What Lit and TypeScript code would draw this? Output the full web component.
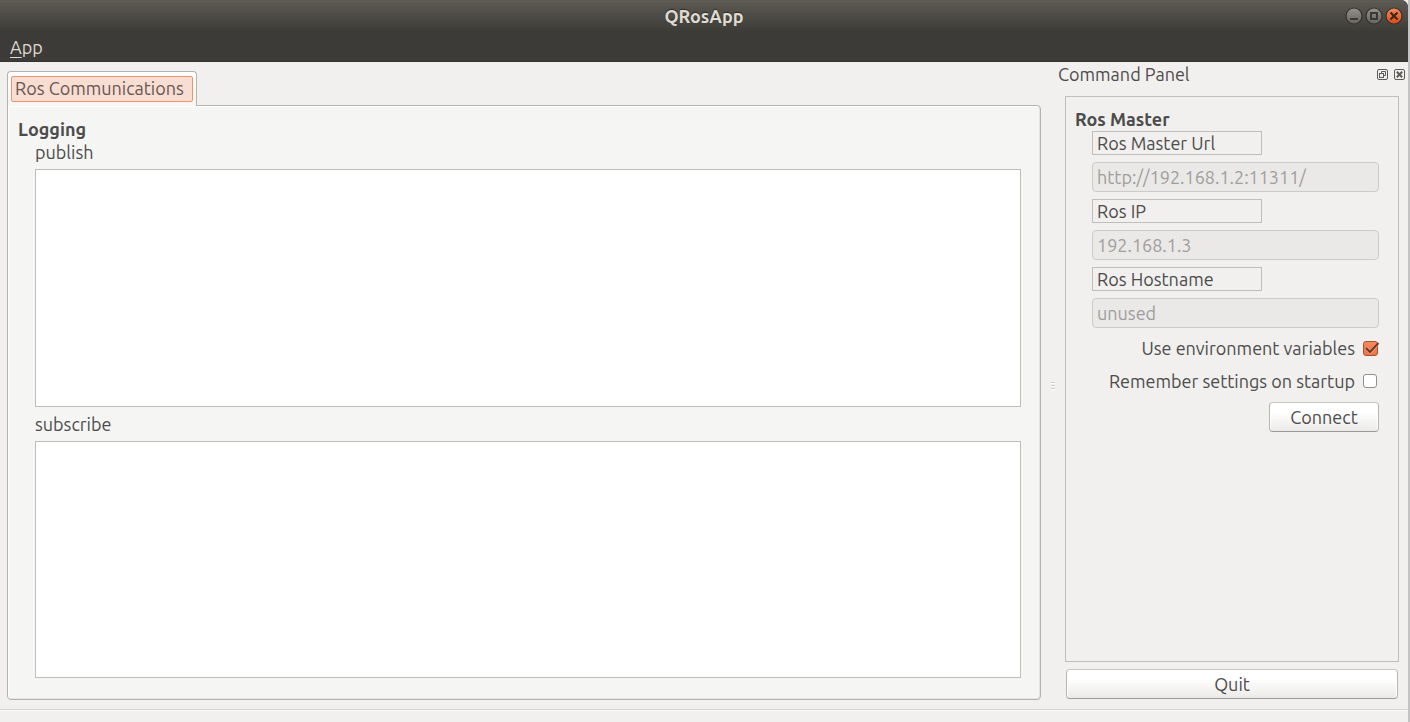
import { LitElement, html, svg, css, nothing } from "lit";
import { customElement, property, state } from "lit/decorators.js";

const textBase = css`
  :host {
    font-family: Ubuntu, "Noto Sans", "Open Sans", sans-serif;
    font-size: 18px;
    line-height: 24px;
    color: #4c4c4c;
    box-sizing: border-box;
  }
  *,
  *::before,
  *::after {
    box-sizing: border-box;
  }
  button,
  input,
  textarea {
    font: inherit;
    color: inherit;
    margin: 0;
  }
`;

@customElement("title-bar")
export class TitleBar extends LitElement {
  @property() heading = "";

  static styles = [
    textBase,
    css`
      :host {
        display: block;
        background: linear-gradient(#504e47 0, #66635a 1px, #5b5951 2px, #3d3b37 32px);
        background-color: #3c3b37;
        border-radius: 0 7px 0 0;
        border-bottom: 1px solid #35342f;
        color: #dfdbd2;
      }
      .top {
        display: grid;
        grid-template-columns: 1fr auto 1fr;
        align-items: center;
        height: 32px;
        padding: 0 5px;
      }
      h1 {
        grid-column: 2;
        margin: 0;
        font-size: 18px;
        line-height: 24px;
        font-weight: 700;
        text-shadow: 0 -1px 1px #2c2b28;
      }
      .controls {
        display: flex;
        justify-content: flex-end;
        gap: 2px;
      }
      .control {
        display: block;
        width: 18px;
        height: 18px;
        padding: 0;
        border: 0;
        background: none;
      }
      svg {
        display: block;
      }
      nav {
        display: flex;
        height: 29px;
        padding: 0 8px;
        align-items: center;
      }
      .menu {
        border: 0;
        background: none;
        padding: 0 2px;
      }
      .key {
        text-decoration: underline;
        text-decoration-thickness: 1px;
        text-underline-offset: 3px;
      }
    `,
  ];

  private control(label: string, close: boolean, glyph: unknown) {
    const id = close ? "hot" : "cool";
    return html`<button class="control" type="button" aria-label=${label}>
      <svg width="18" height="18" viewBox="0 0 18 18" aria-hidden="true">
        <defs>
          <linearGradient id=${id} x1="0" y1="0" x2="0" y2="1">
            <stop offset="0" stop-color=${close ? "#f58a62" : "#94928b"} />
            <stop offset="1" stop-color=${close ? "#dd4814" : "#65635c"} />
          </linearGradient>
        </defs>
        <circle cx="9" cy="9" r="8" fill="url(#${id})" stroke="#33322e" stroke-width="1.2" />
        ${glyph}
      </svg>
    </button>`;
  }

  render() {
    return html`
      <div class="top">
        <h1>${this.heading}</h1>
        <div class="controls">
          ${this.control("Minimize", false, svg`<path d="M5 12h8" stroke="#3a3935" stroke-width="2" />`)}
          ${this.control(
            "Maximize",
            false,
            svg`<rect x="6" y="6" width="6" height="6" fill="none" stroke="#3a3935" stroke-width="2" />`
          )}
          ${this.control(
            "Close",
            true,
            svg`<path d="M5.5 5.5l7 7M12.5 5.5l-7 7" stroke="#3a2a14" stroke-width="2.2" />`
          )}
        </div>
      </div>
      <nav><button class="menu" type="button"><span class="key">A</span>pp</button></nav>
    `;
  }
}

@customElement("log-pane")
export class LogPane extends LitElement {
  static styles = [
    textBase,
    css`
      :host {
        display: flex;
        flex-direction: column;
        min-width: 0;
      }
      .tab {
        align-self: flex-start;
        width: 190px;
        height: 35px;
        padding: 4px 3px 5px;
        margin-bottom: -1px;
        border: 1px solid #b5b3af;
        border-bottom: 0;
        border-radius: 4px 4px 0 0;
        background: linear-gradient(#fff, #f5f5f3);
        text-align: left;
        z-index: 1;
      }
      .tab-text {
        display: block;
        height: 26px;
        padding: 0 3px;
        line-height: 23px;
        border: 1px solid #f0946c;
        border-radius: 2px;
        background: #f8ddd3;
        color: #6a5650;
      }
      .page {
        flex: 1;
        display: flex;
        flex-direction: column;
        min-height: 0;
        padding: 13px 19px 21px 10px;
        border: 1px solid #b5b3af;
        border-radius: 0 4px 4px 4px;
        background: #f5f5f3;
        box-shadow: inset 1px 1px #fff, inset -1px -1px #e4e3e1;
      }
      h2 {
        margin: 0;
        font-size: 18px;
        line-height: 21px;
      }
      .group {
        flex: 1;
        display: flex;
        flex-direction: column;
        min-height: 0;
        padding-left: 17px;
      }
      label {
        line-height: 24px;
      }
      textarea {
        flex: 1;
        display: block;
        width: 100%;
        min-height: 0;
        margin: 5px 0;
        border: 1px solid #bfbebb;
        border-radius: 0;
        background: #fff;
        resize: none;
        outline: 0;
      }
      textarea:last-child {
        margin-bottom: 0;
      }
    `,
  ];

  render() {
    return html`
      <button class="tab" type="button" role="tab" aria-selected="true">
        <span class="tab-text">Ros Communications</span>
      </button>
      <section class="page">
        <h2>Logging</h2>
        <div class="group">
          <label for="publish">publish</label>
          <textarea id="publish" readonly></textarea>
          <label for="subscribe">subscribe</label>
          <textarea id="subscribe" readonly></textarea>
        </div>
      </section>
    `;
  }
}

@customElement("command-panel")
export class CommandPanel extends LitElement {
  @state() private useEnv = true;
  @state() private remember = false;

  static styles = [
    textBase,
    css`
      :host {
        display: flex;
        flex-direction: column;
      }
      header {
        display: flex;
        align-items: center;
        height: 25px;
        gap: 6px;
        padding-right: 3px;
      }
      h2 {
        flex: 1;
        align-self: flex-start;
        margin: 0;
        font-size: 18px;
        line-height: 24px;
        font-weight: 400;
      }
      .dock {
        display: block;
        width: 11px;
        height: 11px;
        padding: 0;
        border: 0;
        background: none;
      }
      svg {
        display: block;
        overflow: visible;
      }
      .frame {
        flex: 1;
        display: flex;
        flex-direction: column;
        margin: 9px 9px 7px 7px;
        padding: 10px 19px 0 9px;
        border: 1px solid #bfbebb;
      }
      h3 {
        margin: 0;
        font-size: 18px;
        line-height: 24px;
      }
      .form {
        display: flex;
        flex-direction: column;
        align-items: flex-end;
        padding-left: 17px;
      }
      .caption {
        align-self: flex-start;
        width: 170px;
        height: 24px;
        padding: 0 4px;
        line-height: 22px;
        border: 1px solid #bfbebb;
      }
      .field {
        width: 100%;
        height: 30px;
        margin: 7px 0;
        padding: 0 4px;
        border: 1px solid #cccbc8;
        border-radius: 4px;
        background: #eae9e7;
        color: #9f9e9c;
        -webkit-text-fill-color: #9f9e9c;
      }
      .checks {
        display: grid;
        justify-items: end;
        gap: 9px;
        margin: 1px 0 9px;
      }
      .check {
        display: flex;
        align-items: flex-end;
        gap: 8px;
        height: 24px;
      }
      .box {
        display: grid;
        width: 16px;
        height: 16px;
        margin-bottom: 3px;
      }
      .box > * {
        grid-area: 1 / 1;
      }
      .box input {
        appearance: none;
        width: 14px;
        height: 14px;
        border: 1px solid #91908c;
        border-radius: 3px;
        background: #fff;
      }
      .box input:checked {
        width: 15px;
        height: 15px;
        border-color: #a4532f;
        background: linear-gradient(#f6895f, #ee7445);
      }
      .box svg {
        pointer-events: none;
      }
      .push {
        height: 30px;
        padding: 0 19px;
        border: 1px solid #b7b5b1;
        border-top-color: #c8c6c2;
        border-bottom-color: #9c9a96;
        border-radius: 4px;
        background: linear-gradient(#fff 30%, #ebeae8);
        box-shadow: inset 1px 0 #fff, inset -1px 0 #fff;
      }
      .connect {
        width: 110px;
      }
      .quit {
        margin: 0 10px 0 8px;
      }
    `,
  ];

  private field(id: string, caption: string, value: string) {
    return html`<label class="caption" for=${id}>${caption}</label>
      <input class="field" id=${id} type="text" .value=${value} disabled />`;
  }

  private check(id: string, caption: string, on: boolean, toggle: () => void) {
    return html`<div class="check">
      <label for=${id}>${caption}</label>
      <span class="box">
        <input id=${id} type="checkbox" .checked=${on} @change=${toggle} />
        ${on
          ? html`<svg width="16" height="16" viewBox="0 0 16 16" aria-hidden="true">
              <path d="M3.2 7l4 4.2L15.4 2.2" fill="none" stroke="#f9b89c" stroke-width="3.4" opacity=".6" />
              <path d="M3 7l4 4L15.4 2" fill="none" stroke="#6b3a26" stroke-width="2" />
            </svg>`
          : nothing}
      </span>
    </div>`;
  }

  render() {
    return html`
      <header>
        <h2>Command Panel</h2>
        <button class="dock" type="button" aria-label="Float">
          <svg width="11" height="11" viewBox="0 0 11 11" fill="none" stroke="#5c5b58" aria-hidden="true">
            <rect x=".5" y=".5" width="10" height="10" rx="1.5" />
            <path d="M4.5 4.5v-2h4v4h-2" />
            <rect x="2.5" y="4.5" width="4" height="4" />
          </svg>
        </button>
        <button class="dock" type="button" aria-label="Close panel">
          <svg width="11" height="11" viewBox="0 0 11 11" fill="none" stroke="#5c5b58" aria-hidden="true">
            <rect x=".5" y=".5" width="10" height="10" rx="1.5" />
            <path d="M2.8 2.8l5.4 5.4M8.2 2.8L2.8 8.2" stroke-width="2" />
          </svg>
        </button>
      </header>
      <section class="frame">
        <h3>Ros Master</h3>
        <div class="form">
          ${this.field("url", "Ros Master Url", "http://192.168.1.2:11311/")}
          ${this.field("ip", "Ros IP", "192.168.1.3")}
          ${this.field("hostname", "Ros Hostname", "unused")}
          <div class="checks">
            ${this.check("env", "Use environment variables", this.useEnv, () => (this.useEnv = !this.useEnv))}
            ${this.check("remember", "Remember settings on startup", this.remember, () => (this.remember = !this.remember))}
          </div>
          <button class="push connect" type="button">Connect</button>
        </div>
      </section>
      <button class="push quit" type="button">Quit</button>
    `;
  }
}

@customElement("app-root")
export class AppRoot extends LitElement {
  static styles = [
    textBase,
    css`
      :host {
        display: flex;
        flex-direction: column;
        height: 100vh;
        padding-right: 2px;
        background: linear-gradient(to left, #c4c3c3 2px, #f1f0ee 2px);
      }
      main {
        flex: 1;
        display: grid;
        grid-template-columns: minmax(0, 1fr) 17px 350px;
        min-height: 0;
        padding-left: 7px;
      }
      log-pane {
        padding: 9px 0;
      }
      command-panel {
        padding-bottom: 10px;
      }
      .splitter {
        align-self: center;
        justify-self: end;
        display: grid;
        gap: 2px;
        padding-right: 3px;
      }
      .grip {
        width: 4px;
        height: 1px;
        background: #cfcdc9;
        box-shadow: 0 1px #fff;
      }
      footer {
        height: 13px;
        border-top: 1px solid #d3d2cf;
        box-shadow: inset 0 1px #fbfbfa;
      }
    `,
  ];

  render() {
    return html`
      <title-bar heading="QRosApp"></title-bar>
      <main>
        <log-pane></log-pane>
        <div class="splitter" role="separator" aria-orientation="vertical">
          <span class="grip"></span><span class="grip"></span><span class="grip"></span>
        </div>
        <command-panel></command-panel>
      </main>
      <footer></footer>
    `;
  }
}
